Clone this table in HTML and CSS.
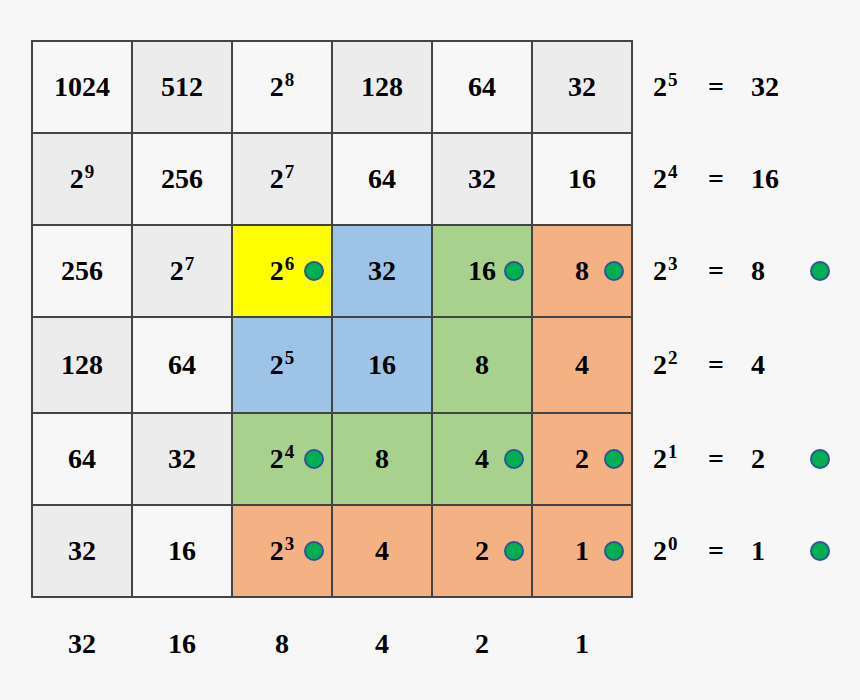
FILE: index.html
```html
<!DOCTYPE html>
<html>
<head>
<meta charset="utf-8">
<link rel="stylesheet" href="styles.css">
</head>
<body>
<div class="page">
  <div class="top">
    <div class="board">
      <div class="cell w"><span>1024</span></div>
      <div class="cell g"><span>512</span></div>
      <div class="cell w"><span>2<sup>8</sup></span></div>
      <div class="cell g"><span>128</span></div>
      <div class="cell w"><span>64</span></div>
      <div class="cell g"><span>32</span></div>

      <div class="cell g"><span>2<sup>9</sup></span></div>
      <div class="cell w"><span>256</span></div>
      <div class="cell g"><span>2<sup>7</sup></span></div>
      <div class="cell w"><span>64</span></div>
      <div class="cell g"><span>32</span></div>
      <div class="cell w"><span>16</span></div>

      <div class="cell w"><span>256</span></div>
      <div class="cell g"><span>2<sup>7</sup></span></div>
      <div class="cell y"><span>2<sup>6</sup></span><i class="dot"></i></div>
      <div class="cell b"><span>32</span></div>
      <div class="cell gr"><span>16</span><i class="dot"></i></div>
      <div class="cell o"><span>8</span><i class="dot"></i></div>

      <div class="cell g"><span>128</span></div>
      <div class="cell w"><span>64</span></div>
      <div class="cell b"><span>2<sup>5</sup></span></div>
      <div class="cell b"><span>16</span></div>
      <div class="cell gr"><span>8</span></div>
      <div class="cell o"><span>4</span></div>

      <div class="cell w"><span>64</span></div>
      <div class="cell g"><span>32</span></div>
      <div class="cell gr"><span>2<sup>4</sup></span><i class="dot"></i></div>
      <div class="cell gr"><span>8</span></div>
      <div class="cell gr"><span>4</span><i class="dot"></i></div>
      <div class="cell o"><span>2</span><i class="dot"></i></div>

      <div class="cell g"><span>32</span></div>
      <div class="cell w"><span>16</span></div>
      <div class="cell o"><span>2<sup>3</sup></span><i class="dot"></i></div>
      <div class="cell o"><span>4</span></div>
      <div class="cell o"><span>2</span><i class="dot"></i></div>
      <div class="cell o"><span>1</span><i class="dot"></i></div>
    </div>
    <div class="side">
      <div class="srow"><span>2<sup>5</sup></span><span>=</span><span>32</span><span></span></div>
      <div class="srow"><span>2<sup>4</sup></span><span>=</span><span>16</span><span></span></div>
      <div class="srow"><span>2<sup>3</sup></span><span>=</span><span>8</span><i class="sdot"></i></div>
      <div class="srow"><span>2<sup>2</sup></span><span>=</span><span>4</span><span></span></div>
      <div class="srow"><span>2<sup>1</sup></span><span>=</span><span>2</span><i class="sdot"></i></div>
      <div class="srow"><span>2<sup>0</sup></span><span>=</span><span>1</span><i class="sdot"></i></div>
    </div>
  </div>
  <div class="bottom">
    <span>32</span><span>16</span><span>8</span><span>4</span><span>2</span><span>1</span>
  </div>
</div>
</body>
</html>
```

FILE: styles.css
```css
html, body {
  margin: 0;
  padding: 0;
  background: #f7f7f7;
}
.page {
  padding: 40px 0 0 31px;
  font-family: "Liberation Serif", "Times New Roman", serif;
  font-weight: bold;
  font-size: 28px;
  color: #000;
}
.top {
  display: flex;
  align-items: flex-start;
}
.board {
  display: grid;
  grid-template-columns: repeat(6, 98px);
  grid-template-rows: 90px 90px 90px 94px 90px 90px;
  gap: 2px;
  padding: 2px;
  background: #444;
}
.cell {
  position: relative;
  display: flex;
  align-items: center;
  justify-content: center;
  line-height: 1;
}
.w { background: #f7f7f7; }
.g { background: #ececec; }
.y { background: #ffff00; }
.b { background: #9dc3e6; }
.gr { background: #a9d18e; }
.o { background: #f4b183; }
sup {
  font-size: 0.68em;
  line-height: 0;
  vertical-align: 0.5em;
  margin-left: 1px;
}
.dot, .sdot {
  display: block;
  width: 16px;
  height: 16px;
  border-radius: 50%;
  background: #00b050;
  border: 2px solid #2f5597;
}
.dot {
  position: absolute;
  right: 7px;
  top: 50%;
  margin-top: -10px;
}
.side {
  margin-left: 20px;
  padding-top: 1px;
  display: grid;
  grid-template-rows: 92px 92px 92px 96px 92px 92px;
}
.srow {
  display: grid;
  grid-template-columns: 55px 43px 59px 20px;
  align-items: center;
  line-height: 1;
}
.bottom {
  display: grid;
  grid-template-columns: repeat(6, 98px);
  column-gap: 2px;
  padding: 0 2px;
  height: 92px;
  align-items: center;
  justify-items: center;
  line-height: 1;
}
```
